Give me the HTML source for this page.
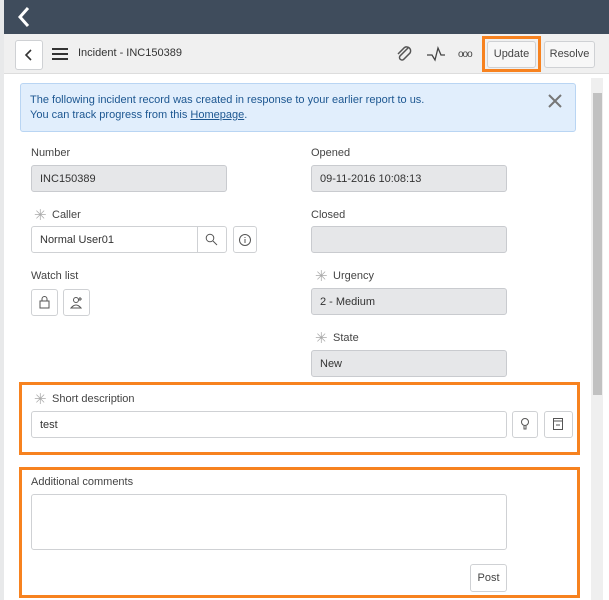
<!DOCTYPE html>
<html><head><style>
*{box-sizing:border-box;margin:0;padding:0}
body{width:609px;height:600px;overflow:hidden;background:#fff;font-family:"Liberation Sans",sans-serif;font-size:11px;color:#333;position:relative}
.a{position:absolute}
.lbl{position:absolute;font-size:11px;color:#444}
.inp{position:absolute;background:#e6e7e9;border:1px solid #c9cbcf;border-radius:3px;height:27px;padding:7px 8px;font-size:11px;color:#333}
.w{background:#fff;border-color:#cfd1d4}
.btn{position:absolute;background:#fff;border:1px solid #cfd1d4;border-radius:3px}
.ast{color:#aaa;font-size:15px;position:absolute;top:-3px;left:-18px}
.ob{position:absolute;border:3px solid #f7821f}
</style></head><body>
<div class="a" style="left:0;top:0;width:4px;height:600px;background:#e8e9ea"></div>
<div class="a" style="left:4px;top:0;width:605px;height:34px;background:#3f4c5c"></div>
<svg class="a" style="left:14px;top:5px" width="20" height="24"><path d="M14 3 L6 12 L14 21" stroke="#fff" stroke-width="3" fill="none"/></svg>
<div class="a" style="left:4px;top:34px;width:605px;height:40px;background:#f0f0f0;border-bottom:1px solid #ddd"></div>
<div class="btn" style="left:15px;top:40px;width:28px;height:30px"></div>
<svg class="a" style="left:22px;top:47px" width="14" height="16"><path d="M9 3 L4 8 L9 13" stroke="#333" stroke-width="1.6" fill="none"/></svg>
<div class="a" style="left:52px;top:48px;width:16px;height:2px;background:#333;box-shadow:0 5px #333,0 10px #333"></div>
<div class="a" style="left:78px;top:47px;font-size:11px;color:#333">Incident - INC150389</div>
<svg class="a" style="left:394px;top:44px" width="20" height="20"><path d="M14 4 L6 12 a2.5 2.5 0 0 0 3.5 3.5 L16 9 a4 4 0 0 0-5.5-5.5 L4 10" stroke="#555" stroke-width="1.5" fill="none"/></svg>
<svg class="a" style="left:426px;top:45px" width="20" height="18"><path d="M1 10 L6 10 L9 15 L12 3 L15 10 L19 10" stroke="#444" stroke-width="1.3" fill="none"/></svg>
<div class="a" style="left:458px;top:49px;font-size:10px;color:#444;letter-spacing:-1px">ooo</div>
<div class="ob" style="left:482px;top:36px;width:59px;height:36px"></div>
<div class="btn" style="left:487px;top:41px;width:49px;height:27px;text-align:center;line-height:25px;color:#444;background:#f7f7f7">Update</div>
<div class="btn" style="left:544px;top:41px;width:51px;height:27px;text-align:center;line-height:25px;color:#444;background:#f7f7f7">Resolve</div>
<div class="a" style="left:591px;top:78px;width:12px;height:522px;background:#efefef"></div>
<div class="a" style="left:593px;top:93px;width:9px;height:302px;background:#c1c1c1"></div>
<div class="a" style="left:20px;top:83px;width:556px;height:49px;background:#e1eefc;border:1px solid #b9d5f3;border-radius:3px"></div>
<div class="a" style="left:30px;top:93px;color:#1d5791;font-size:11px;line-height:15px">The following incident record was created in response to your earlier report to us.<br>You can track progress from this <u>Homepage</u>.</div>
<svg class="a" style="left:547px;top:93px" width="16" height="16"><path d="M2 2 L14 14 M14 2 L2 14" stroke="#777" stroke-width="2"/></svg>
<div class="lbl" style="left:31px;top:147px">Number</div>
<div class="inp" style="left:31px;top:165px;width:196px">INC150389</div>
<div class="lbl" style="left:311px;top:147px">Opened</div>
<div class="inp" style="left:311px;top:165px;width:196px">09-11-2016 10:08:13</div>
<div class="lbl" style="left:52px;top:209px"><span class="ast">✳</span>Caller</div>
<div class="inp w" style="left:31px;top:226px;width:196px">Normal User01</div>
<div class="a" style="left:197px;top:227px;width:1px;height:25px;background:#cfd1d4"></div>
<svg class="a" style="left:205px;top:233px" width="13" height="13"><circle cx="5" cy="5" r="3.8" stroke="#555" fill="none"/><path d="M8 8 L12 12" stroke="#555"/></svg>
<div class="btn" style="left:233px;top:226px;width:24px;height:27px"></div>
<svg class="a" style="left:238px;top:233px" width="14" height="14"><circle cx="7" cy="7" r="5.5" stroke="#555" fill="none"/><path d="M7 6 V10 M7 4 V5" stroke="#555"/></svg>
<div class="lbl" style="left:311px;top:209px">Closed</div>
<div class="inp" style="left:311px;top:226px;width:196px"></div>
<div class="lbl" style="left:31px;top:270px">Watch list</div>
<div class="btn" style="left:31px;top:289px;width:27px;height:27px"></div>
<svg class="a" style="left:38px;top:295px" width="13" height="14"><rect x="2" y="6" width="9" height="7" stroke="#555" fill="none"/><path d="M4 6 V4 a2.5 2.5 0 0 1 5 0 V6" stroke="#555" fill="none"/></svg>
<div class="btn" style="left:63px;top:289px;width:27px;height:27px"></div>
<svg class="a" style="left:70px;top:295px" width="14" height="14"><circle cx="6" cy="5" r="2.5" stroke="#555" fill="none"/><path d="M1 13 Q6 7 11 13 Z M10 2 V6 M8 4 H12" stroke="#555" fill="none"/></svg>
<div class="lbl" style="left:333px;top:270px"><span class="ast">✳</span>Urgency</div>
<div class="inp" style="left:311px;top:288px;width:196px">2 - Medium</div>
<div class="lbl" style="left:333px;top:332px"><span class="ast">✳</span>State</div>
<div class="inp" style="left:311px;top:350px;width:196px">New</div>
<div class="ob" style="left:19px;top:382px;width:561px;height:73px"></div>
<div class="lbl" style="left:52px;top:393px"><span class="ast">✳</span>Short description</div>
<div class="inp w" style="left:31px;top:411px;width:476px">test</div>
<div class="btn" style="left:512px;top:411px;width:26px;height:27px"></div>
<svg class="a" style="left:519px;top:417px" width="12" height="14"><circle cx="6" cy="5" r="3.5" stroke="#555" fill="none"/><path d="M5 9 V12 H7 V9" stroke="#555" fill="none"/></svg>
<div class="btn" style="left:544px;top:411px;width:29px;height:27px"></div>
<svg class="a" style="left:552px;top:417px" width="12" height="14"><rect x="1.5" y="1.5" width="9" height="11" stroke="#555" fill="none"/><path d="M1.5 4 H10.5 M4 8 H8" stroke="#555"/></svg>
<div class="ob" style="left:19px;top:467px;width:561px;height:131px"></div>
<div class="lbl" style="left:31px;top:476px">Additional comments</div>
<div class="a" style="left:31px;top:494px;width:476px;height:56px;border:1px solid #cfd1d4;border-radius:3px"></div>
<div class="btn" style="left:470px;top:564px;width:37px;height:28px;text-align:center;line-height:26px;color:#444">Post</div>
</body></html>
